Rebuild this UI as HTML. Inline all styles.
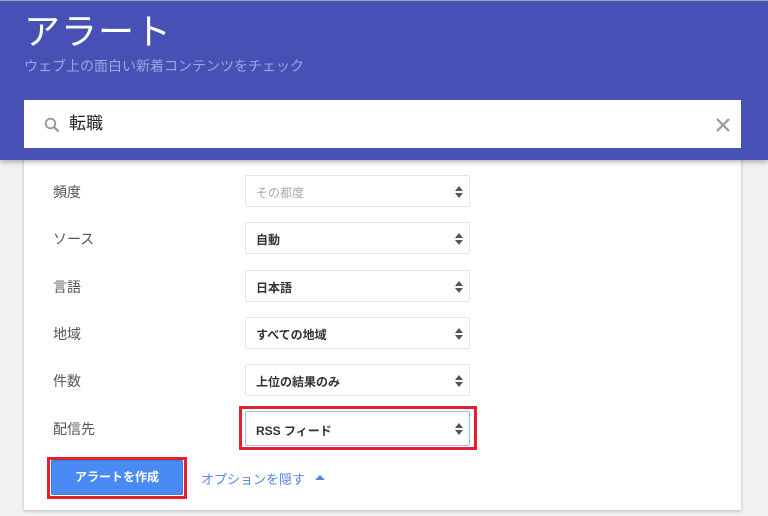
<!DOCTYPE html>
<html><head><meta charset="utf-8"><style>
*{margin:0;padding:0;box-sizing:border-box}
body{width:768px;height:516px;background:#f1f1f1;position:relative;overflow:hidden;font-family:"Liberation Sans","Noto Sans CJK JP",sans-serif}
.hdr{position:absolute;left:0;top:0;width:768px;height:160px;background:#4751b5;box-shadow:0 2px 5px rgba(0,0,0,.3);z-index:2}
.topline{position:absolute;left:0;top:0;width:768px;height:1px;background:#9aa;z-index:3}
h1{position:absolute;left:24px;top:14px;font-size:36px;line-height:36px;font-weight:normal;color:#fff;letter-spacing:1px}
.sub{position:absolute;left:24px;top:58px;font-size:14px;line-height:16px;color:#9ea5e0}
.search{position:absolute;left:24px;top:100px;width:717px;height:48px;background:#fff;z-index:3}
.search .t{position:absolute;left:45px;top:14px;font-size:17px;line-height:20px;color:#222}
.card{position:absolute;left:24px;top:150px;width:717px;height:360px;background:#fff;box-shadow:0 1px 3px rgba(0,0,0,.25)}
.lab{position:absolute;left:53px;font-size:14px;color:#555}
.sel{position:absolute;left:245px;width:225px;height:32px;border:1px solid #e5e5e5;border-radius:2px;background:#fff;font-size:12px;font-weight:bold;color:#333;padding:8px 0 0 10px}
.sel.dis{color:#aaa;font-weight:normal}
.arr{position:absolute;right:6px;top:10px;width:8px;height:12px}
.arr:before{content:"";position:absolute;left:0;top:0;border-left:4px solid transparent;border-right:4px solid transparent;border-bottom:5px solid #555}
.arr:after{content:"";position:absolute;left:0;top:7px;border-left:4px solid transparent;border-right:4px solid transparent;border-top:5px solid #555}
.red{position:absolute;border:3px solid #e5202a}
.btn{position:absolute;left:51px;top:460px;width:132px;height:35px;background:#4a8af4;border:1px solid #3b78e7;border-radius:2px;color:#fff;font-size:12px;font-weight:bold;text-align:center;line-height:33px}
.link{position:absolute;left:201px;top:469px;font-size:13px;color:#5886e6}
.tri{position:absolute;left:315px;top:475px;border-left:5px solid transparent;border-right:5px solid transparent;border-bottom:5px solid #5886e6}
</style></head><body>
<div class="topline"></div>
<div class="hdr">
<h1>アラート</h1>
<div class="sub">ウェブ上の面白い新着コンテンツをチェック</div>
</div>
<div class="search">
<svg style="position:absolute;left:20px;top:17px" width="16" height="16" viewBox="0 0 16 16"><circle cx="6.5" cy="6.5" r="4.8" fill="none" stroke="#999" stroke-width="1.8"/><line x1="10" y1="10" x2="14.5" y2="14.5" stroke="#999" stroke-width="2.2"/></svg>
<div class="t">転職</div>
<svg style="position:absolute;left:692px;top:18px" width="14" height="14" viewBox="0 0 14 14"><path d="M1 1L13 13M13 1L1 13" stroke="#999" stroke-width="2.2"/></svg>
</div>
<div class="card"></div>
<div class="lab" style="top:182px">頻度</div>
<div class="lab" style="top:229px">ソース</div>
<div class="lab" style="top:277px">言語</div>
<div class="lab" style="top:324px">地域</div>
<div class="lab" style="top:371px">件数</div>
<div class="lab" style="top:419px">配信先</div>
<div class="sel dis" style="top:175px">その都度<span class="arr"></span></div>
<div class="sel" style="top:222px">自動<span class="arr"></span></div>
<div class="sel" style="top:270px">日本語<span class="arr"></span></div>
<div class="sel" style="top:317px">すべての地域<span class="arr"></span></div>
<div class="sel" style="top:364px">上位の結果のみ<span class="arr"></span></div>
<div class="sel" style="top:411px;height:35px;border-color:#9bbcf5;padding-top:10px">RSS フィード<span class="arr" style="top:11px"></span></div>
<div class="red" style="left:239px;top:406px;width:238px;height:44px"></div>
<div class="btn">アラートを作成</div>
<div class="red" style="left:47px;top:457px;width:140px;height:42px"></div>
<div class="link">オプションを隠す</div>
<div class="tri"></div>
</body></html>
